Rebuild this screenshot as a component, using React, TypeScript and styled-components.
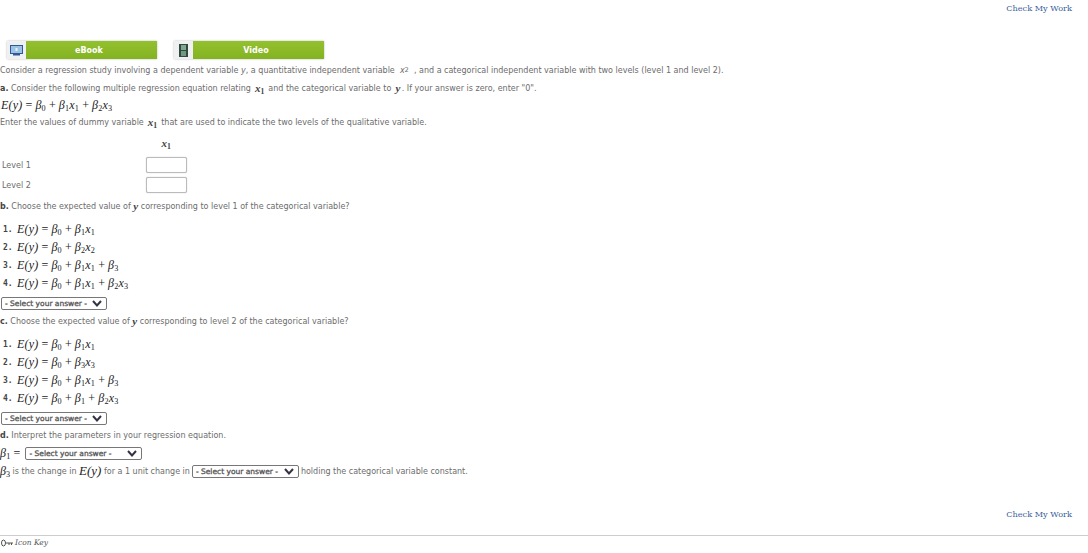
import React from 'react';
import styled, { createGlobalStyle } from 'styled-components';

const GlobalStyle = createGlobalStyle`
  html, body {
    margin: 0;
    padding: 0;
    background: #fff;
  }
  body {
    font-family: "DejaVu Sans", Verdana, sans-serif;
    font-size: 8px;
    color: #6c6c6c;
  }
`;

const Page = styled.div`
  width: 1088px;
  height: 553px;
  display: flex;
  flex-direction: column;
  overflow: hidden;
`;

const TopBar = styled.div`
  flex: none;
  height: 41px;
  padding: 3px 16px 0 0;
  box-sizing: border-box;
  display: flex;
  justify-content: flex-end;
`;

const BottomBar = styled.div`
  flex: 1;
  padding: 0 16px 15px 0;
  display: flex;
  justify-content: flex-end;
  align-items: flex-end;
`;

const CheckLink = styled.a`
  font-family: "DejaVu Serif", "Liberation Serif", serif;
  font-size: 8.2px;
  line-height: 11px;
  color: #3b5f9c;
`;

const ResourceBar = styled.div`
  flex: none;
  display: flex;
  gap: 17px;
  padding-left: 7px;
  height: 18px;
`;

const Resource = styled.div`
  display: flex;
  width: 150px;
  box-shadow: 0 0 2px #bbb;
`;

const ResourceIcon = styled.div`
  width: 19px;
  background: #eef0f2;
  display: flex;
  align-items: center;
  justify-content: center;
`;

const ResourceLabel = styled.div`
  flex: 1;
  background: linear-gradient(#93c02f, #84b322);
  color: #fff;
  font-weight: bold;
  font-size: 8px;
  padding-right: 5px;
  display: flex;
  align-items: center;
  justify-content: center;
`;

const Line = styled.div<{ $h?: number }>`
  flex: none;
  height: ${(p) => p.$h ?? 18}px;
  display: flex;
  align-items: center;
  white-space: pre;
`;

const EquationLine = styled(Line)`
  padding-left: 1px;
`;

const Label = styled.b`
  color: #444;
`;

const Var = styled.i`
  font-family: "Liberation Serif", serif;
  font-weight: bold;
  font-size: 11px;
  line-height: 1;
  color: #444;
  margin: 0 1.5px;

  sub {
    font-size: 0.7em;
    font-style: normal;
    line-height: 0;
    vertical-align: -0.25em;
  }
`;

const QuestionVar = styled(Var)`
  margin: 0;
`;

const Math = styled.span<{ $size?: number; $tight?: boolean }>`
  font-family: "Liberation Serif", serif;
  font-style: italic;
  font-size: ${(p) => p.$size ?? 12}px;
  letter-spacing: ${(p) => (p.$tight ? 0 : 0.2)}px;
  color: #222;

  sub {
    font-size: 0.68em;
    font-style: normal;
    line-height: 0;
    vertical-align: -0.25em;
  }
`;

const Op = styled.span`
  font-style: normal;
  margin: 0 3px;
`;

const Num = styled.b`
  font-family: "DejaVu Sans Mono", "Liberation Mono", monospace;
  font-size: 8px;
  color: #444;
  width: 17px;
  padding-left: 3px;
  box-sizing: border-box;
`;

const LevelGrid = styled.div`
  flex: none;
  display: grid;
  grid-template-columns: 146px 41px;
  grid-auto-rows: 16px;
  row-gap: 4px;
  align-items: center;
`;

const LevelName = styled.span`
  padding-left: 2px;
`;

const AnswerBox = styled.div`
  width: 41px;
  height: 16px;
  box-sizing: border-box;
  border: 1px solid #bbb;
  border-radius: 2px;
  box-shadow: 0 0 1px #aaa;
  background: #fff;
`;

const HeaderCell = styled.div`
  flex: none;
  height: 28px;
  padding-left: 160px;
  display: flex;
  align-items: center;
`;

const Spacer = styled.div<{ $h: number }>`
  flex: none;
  height: ${(p) => p.$h}px;
`;

const Select = styled.div<{ $w: number; $m: number }>`
  width: ${(p) => p.$w}px;
  height: 13px;
  box-sizing: border-box;
  border: 1px solid #777;
  border-radius: 2px;
  display: inline-flex;
  align-items: center;
  justify-content: space-between;
  padding: 0 4px 0 3px;
  font-size: 7.5px;
  -webkit-text-stroke: 0.3px #555;
  color: #555;
  margin: 0 ${(p) => p.$m}px;
`;

const Footer = styled.div`
  flex: none;
  height: 18px;
  border-top: 1px solid #ccc;
  display: flex;
  align-items: center;
  gap: 2px;
  padding: 0 0 4px 1px;
  box-sizing: border-box;
`;

const KeyLabel = styled.i`
  font-family: "DejaVu Serif", "Liberation Serif", serif;
  font-size: 7.5px;
  color: #555;
`;

const Chevron = () => (
  <svg width="10" height="7" viewBox="0 0 10 7">
    <path d="M1 1 L5 5.5 L9 1" fill="none" stroke="#334" strokeWidth="2" />
  </svg>
);

const SelectAnswer = ({ w, m }: { w: number; m: number }) => (
  <Select $w={w} $m={m}>
    <span>- Select your answer -</span>
    <Chevron />
  </Select>
);

const BookIcon = () => (
  <svg width="13" height="11" viewBox="0 0 13 11">
    <rect x="0.5" y="0.5" width="12" height="8" fill="#9cc3e6" stroke="#2f5a94" />
    <rect x="3" y="9" width="7" height="1.5" fill="#2f5a94" />
    <rect x="5.5" y="3" width="2" height="3" fill="#e8f1f8" />
  </svg>
);

const FilmIcon = () => (
  <svg width="9" height="13" viewBox="0 0 9 13">
    <rect width="9" height="13" fill="#33493f" />
    <rect x="2" y="1" width="5" height="5" fill="#7fa890" />
    <rect x="2" y="7" width="5" height="5" fill="#6f9a80" />
  </svg>
);

const KeyIcon = () => (
  <svg width="12" height="8" viewBox="0 0 12 8">
    <ellipse cx="2.5" cy="4" rx="2" ry="3" fill="none" stroke="#555" />
    <path d="M4.5 4 H12 M8 4 V6 M10.5 4 V6" stroke="#555" />
  </svg>
);

const BaseEquation = ({ children }: { children: React.ReactNode }) => (
  <Math>
    E(y)<Op>=</Op>β<sub>0</sub><Op>+</Op>
    {children}
  </Math>
);

const optionsB = [
  <>β<sub>1</sub>x<sub>1</sub></>,
  <>β<sub>2</sub>x<sub>2</sub></>,
  <>β<sub>1</sub>x<sub>1</sub><Op>+</Op>β<sub>3</sub></>,
  <>β<sub>1</sub>x<sub>1</sub><Op>+</Op>β<sub>2</sub>x<sub>3</sub></>,
];

const optionsC = [
  <>β<sub>1</sub>x<sub>1</sub></>,
  <>β<sub>3</sub>x<sub>3</sub></>,
  <>β<sub>1</sub>x<sub>1</sub><Op>+</Op>β<sub>3</sub></>,
  <>β<sub>1</sub><Op>+</Op>β<sub>2</sub>x<sub>3</sub></>,
];

const OptionList = ({ options }: { options: React.ReactNode[] }) => (
  <>
    {options.map((o, i) => (
      <Line key={i}>
        <Num>{i + 1}.</Num>
        <BaseEquation>{o}</BaseEquation>
      </Line>
    ))}
  </>
);

export default function App() {
  return (
    <Page>
      <GlobalStyle />
      <TopBar>
        <CheckLink>Check My Work</CheckLink>
      </TopBar>
      <ResourceBar>
        <Resource>
          <ResourceIcon><BookIcon /></ResourceIcon>
          <ResourceLabel>eBook</ResourceLabel>
        </Resource>
        <Resource>
          <ResourceIcon><FilmIcon /></ResourceIcon>
          <ResourceLabel>Video</ResourceLabel>
        </Resource>
      </ResourceBar>
      <Line $h={22}>Consider a regression study involving a dependent variable <i>y</i>, a quantitative independent variable  <i>x</i> <sub>2</sub>  , and a categorical independent variable with two levels (level 1 and level 2).</Line>
      <Line $h={14}><Label>a.</Label> Consider the following multiple regression equation relating <Var>x<sub>1</sub></Var> and the categorical variable to <Var>y</Var>. If your answer is zero, enter "0".</Line>
      <EquationLine $h={20}><Math>E(y)<Op>=</Op>β<sub>0</sub><Op>+</Op>β<sub>1</sub>x<sub>1</sub><Op>+</Op>β<sub>2</sub>x<sub>3</sub></Math></EquationLine>
      <Line $h={14}>Enter the values of dummy variable <Var>x<sub>1</sub></Var> that are used to indicate the two levels of the qualitative variable.</Line>
      <HeaderCell><Var>x<sub>1</sub></Var></HeaderCell>
      <LevelGrid>
        <LevelName>Level 1</LevelName>
        <AnswerBox />
        <LevelName>Level 2</LevelName>
        <AnswerBox />
      </LevelGrid>
      <Line $h={26}><Label>b.</Label> Choose the expected value of <QuestionVar>y</QuestionVar> corresponding to level 1 of the categorical variable?</Line>
      <Spacer $h={1} />
      <OptionList options={optionsB} />
      <Line $h={23}><SelectAnswer w={106} m={1} /></Line>
      <Line $h={12}><Label>c.</Label> Choose the expected value of <QuestionVar>y</QuestionVar> corresponding to level 2 of the categorical variable?</Line>
      <Spacer $h={8} />
      <OptionList options={optionsC} />
      <Line $h={22}><SelectAnswer w={106} m={1} /></Line>
      <Line $h={13}><Label>d.</Label> Interpret the parameters in your regression equation.</Line>
      <Line $h={22}>
        <Math>β<sub>1</sub><Op>=</Op></Math>
        <SelectAnswer w={117} m={2} />
      </Line>
      <Line $h={14}>
        <Math $tight>β<sub>3</sub></Math> is the change in <Math $size={13} $tight>E(y)</Math> for a 1 unit change in
        <SelectAnswer w={107} m={2} />
        holding the categorical variable constant.
      </Line>
      <BottomBar>
        <CheckLink>Check My Work</CheckLink>
      </BottomBar>
      <Footer>
        <KeyIcon />
        <KeyLabel>Icon Key</KeyLabel>
      </Footer>
    </Page>
  );
}
